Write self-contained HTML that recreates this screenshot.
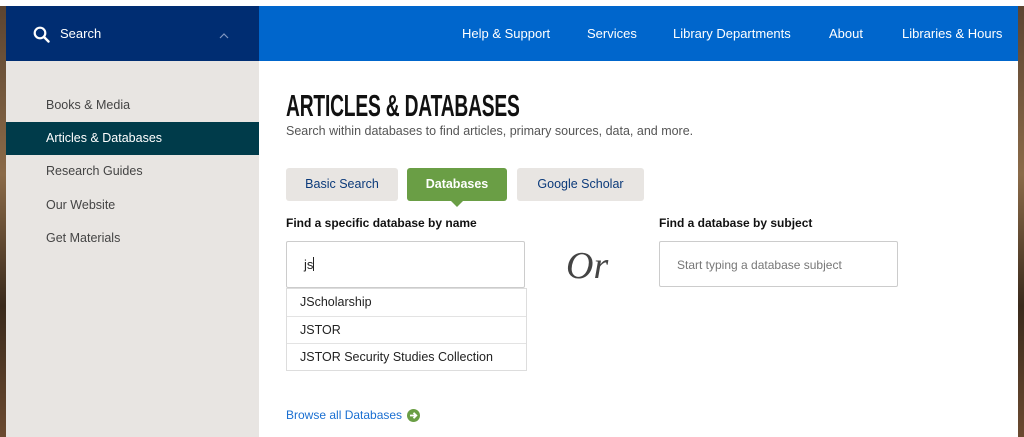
<!DOCTYPE html>
<html><head><meta charset="utf-8"><style>
*{box-sizing:border-box;margin:0;padding:0}
body{width:1024px;height:437px;overflow:hidden;position:relative;font-family:"Liberation Sans",sans-serif;background:linear-gradient(180deg,#5a4330,#8a6a48 40%,#3a2a1c 70%,#6b4a30);}
.top{position:absolute;left:0;top:0;width:1024px;height:6px;background:#fff}
.sb{position:absolute;left:6px;top:6px;width:253px;height:55px;background:#002d72;color:#fff;font-size:13px}
.nav{position:absolute;left:259px;top:6px;width:759px;height:55px;background:#0066cc;color:#fff;font-size:13px}
.nav span{position:absolute;top:20px}
.side{position:absolute;left:6px;top:61px;width:253px;height:376px;background:#e8e5e2}
.side div{position:absolute;left:40px;font-size:12.5px;color:#444}
.act{position:absolute;left:6px;top:122px;width:253px;height:33px;background:#003b4a}
.main{position:absolute;left:259px;top:61px;width:759px;height:376px;background:#fff}
h1{position:absolute;left:286px;top:88px;font-family:"Liberation Sans Narrow","Liberation Sans",sans-serif;font-weight:bold;font-size:31px;letter-spacing:-0.3px;color:#111;transform:scaleX(0.62);transform-origin:left;white-space:nowrap}
.tab{position:absolute;top:168px;height:33px;border-radius:3px;background:#e8e5e2;color:#0b3a7a;font-size:12.5px;text-align:center;line-height:33px}
.lbl{position:absolute;font-size:12px;font-weight:bold;color:#111}
.inp{position:absolute;border:1px solid #ccc;border-radius:2px;background:#fff}
.dd{position:absolute;left:286px;top:288px;width:241px;height:83px;border:1px solid #ddd;background:#fff}
.dd div{height:27.5px;border-bottom:1px solid #e3e3e3;font-size:12.5px;color:#222;padding-left:13px;line-height:27px}
</style></head><body>
<div class="top"></div>
<div class="sb">
<svg style="position:absolute;left:27px;top:20px" width="17" height="17" viewBox="0 0 17 17"><circle cx="7" cy="7" r="5.3" fill="none" stroke="#fff" stroke-width="2.2"/><line x1="11" y1="11" x2="15.5" y2="15.5" stroke="#fff" stroke-width="2.4" stroke-linecap="round"/></svg>
<span style="position:absolute;left:54px;top:20px">Search</span>
<svg style="position:absolute;left:213px;top:26px" width="10" height="7" viewBox="0 0 10 7"><path d="M1 6 L5 2 L9 6" fill="none" stroke="#7f96c0" stroke-width="1.2"/></svg>
</div>
<div class="nav">
<span style="left:203px">Help &amp; Support</span>
<span style="left:328px">Services</span>
<span style="left:414px">Library Departments</span>
<span style="left:570px">About</span>
<span style="left:643px">Libraries &amp; Hours</span>
</div>
<div class="side">
<div style="top:37px">Books &amp; Media</div>
<div style="top:103px">Research Guides</div>
<div style="top:137px">Our Website</div>
<div style="top:170px">Get Materials</div>
</div>
<div class="act"></div>
<svg style="position:absolute;left:258px;top:122px" width="10" height="33"><path d="M0 0 L9 16.5 L0 33Z" fill="#003b4a"/></svg>
<div style="position:absolute;left:46px;top:131px;font-size:12.5px;color:#fff">Articles &amp; Databases</div>
<div class="main"></div>
<h1>ARTICLES &amp; DATABASES</h1>
<div style="position:absolute;left:286px;top:124px;font-size:12.5px;color:#555">Search within databases to find articles, primary sources, data, and more.</div>
<div class="tab" style="left:286px;width:112px">Basic Search</div>
<div class="tab" style="left:407px;width:100px;background:#6a9e45;color:#fff;font-weight:bold">Databases</div>
<svg style="position:absolute;left:450px;top:200px" width="14" height="7"><path d="M0 0 L7 7 L14 0Z" fill="#6a9e45"/></svg>
<div class="tab" style="left:517px;width:127px">Google Scholar</div>
<div class="lbl" style="left:286px;top:216px">Find a specific database by name</div>
<div class="lbl" style="left:659px;top:216px">Find a database by subject</div>
<div class="inp" style="left:286px;top:241px;width:239px;height:47px"><span style="position:absolute;left:17px;top:15px;font-size:13px;color:#222">js<span style="display:inline-block;width:1px;height:14px;background:#222;vertical-align:-2px"></span></span></div>
<div class="dd"><div>JScholarship</div><div>JSTOR</div><div style="border:none">JSTOR Security Studies Collection</div></div>
<div style="position:absolute;left:566px;top:244px;font-family:'Liberation Serif',serif;font-style:italic;font-size:38px;color:#444">Or</div>
<div class="inp" style="left:659px;top:241px;width:239px;height:46px"><span style="position:absolute;left:17px;top:16px;font-size:12px;color:#777">Start typing a database subject</span></div>
<div style="position:absolute;left:286px;top:408px;font-size:12px;color:#1a6fd1">Browse all Databases</div>
<svg style="position:absolute;left:407px;top:409px" width="13" height="13" viewBox="0 0 13 13"><circle cx="6.5" cy="6.5" r="6.5" fill="#6a9e45"/><path d="M3 6.5 H9 M6.5 3.8 L9.3 6.5 L6.5 9.2" fill="none" stroke="#fff" stroke-width="1.8"/></svg>
</body></html>
